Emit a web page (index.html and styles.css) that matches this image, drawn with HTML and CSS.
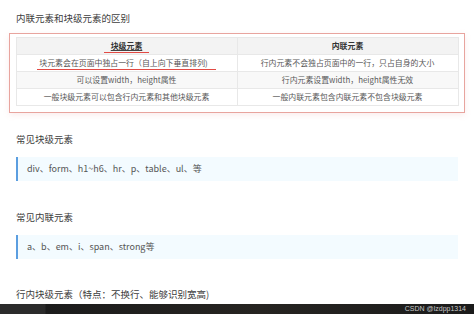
FILE: index.html
```html
<!DOCTYPE html>
<html lang="zh">
<head>
<meta charset="utf-8">
<link rel="stylesheet" href="styles.css">
</head>
<body>
<div class="page">
  <h3 class="heading first">内联元素和块级元素的区别</h3>
  <div class="redbox">
    <table class="cmp">
      <thead>
        <tr><th><span class="mark-head">块级元素</span></th><th>内联元素</th></tr>
      </thead>
      <tbody>
        <tr><td><span class="mark-row">块元素会在页面中独占一行（自上向下垂直排列)</span></td><td>行内元素不会独占页面中的一行，只占自身的大小</td></tr>
        <tr class="alt"><td>可以设置width，height属性</td><td>行内元素设置width，height属性无效</td></tr>
        <tr><td>一般块级元素可以包含行内元素和其他块级元素</td><td>一般内联元素包含内联元素不包含块级元素</td></tr>
      </tbody>
    </table>
  </div>
  <h3 class="heading h2">常见块级元素</h3>
  <blockquote class="quote">div、form、h1~h6、hr、p、table、ul、等</blockquote>
  <h3 class="heading h3">常见内联元素</h3>
  <blockquote class="quote">a、b、em、i、span、strong等</blockquote>
  <h3 class="heading h4">行内块级元素（特点：不换行、能够识别宽高)</h3>
</div>
<div class="bar"><span class="wm">CSDN @lzdpp1314</span></div>
</body>
</html>
```
FILE: styles.css
```css
html, body {
  margin: 0;
  padding: 0;
  background: #fff;
}
body {
  width: 474px;
  height: 314px;
  overflow: hidden;
  font-family: "Noto Sans CJK SC", "Noto Sans", sans-serif;
  color: #4d4d4d;
  display: flex;
  flex-direction: column;
}
.page {
  flex: 1;
  display: flex;
  flex-direction: column;
  padding: 0 16px;
}
.heading {
  margin: 0;
  font-size: 9.5px;
  font-weight: normal;
  line-height: 14px;
  color: #3d3d3d;
}
.heading.first { margin-top: 11px; margin-bottom: 8px; }
.redbox {
  margin: 0 -7px;
  border: 1.5px solid #e8a49e;
  box-shadow: 0 2px 6px rgba(230,150,150,0.18);
  padding: 3px 5px 6px 5.5px;
}
.cmp {
  width: 443px;
  border-collapse: collapse;
  font-size: 7.9px;
  color: #585858;
  table-layout: fixed;
}
.cmp th, .cmp td {
  border: 1px solid #e8e8e8;
  height: 16px;
  padding: 0;
  text-align: center;
  line-height: 12px;
}
.cmp th {
  background: #f3f3f3;
  font-weight: bold;
  color: #333;
}
.cmp tr.alt td { background: #f8f8f8; }
.mark-head {
  display: inline-block;
  padding: 0 7px 1px;
  line-height: 10px;
  text-decoration: underline;
  text-decoration-color: #444;
  border-bottom: 1.5px solid #e24a44;
}
.mark-row {
  display: inline-block;
  padding: 0 8px 1px 2px;
  line-height: 11px;
  border-bottom: 1.5px solid #e24a44;
}
.heading.h2 { margin-top: 19px; }
.quote {
  margin: 11px 0 0;
  height: 24px;
  box-sizing: border-box;
  width: 442px;
  background: #f3fbff;
  border-left: 2px solid #5b9ee0;
  padding: 0 0 0 9px;
  font-size: 9px;
  line-height: 24px;
  color: #555;
}
.heading.h3 { margin-top: 29px; }
.heading.h4 { margin-top: 28px; }
.bar {
  height: 10px;
  flex: none;
  background: linear-gradient(90deg, #2b2b2b 0, #2b2b2b 45px, #1c1c1c 46px, #262421 55%, #1b1b1b 100%);
  display: flex;
  justify-content: flex-end;
  align-items: center;
  padding-right: 8px;
}
.wm {
  font-family: "Liberation Sans", sans-serif;
  font-size: 7px;
  color: #c8c8c8;
  line-height: 10px;
}
```
